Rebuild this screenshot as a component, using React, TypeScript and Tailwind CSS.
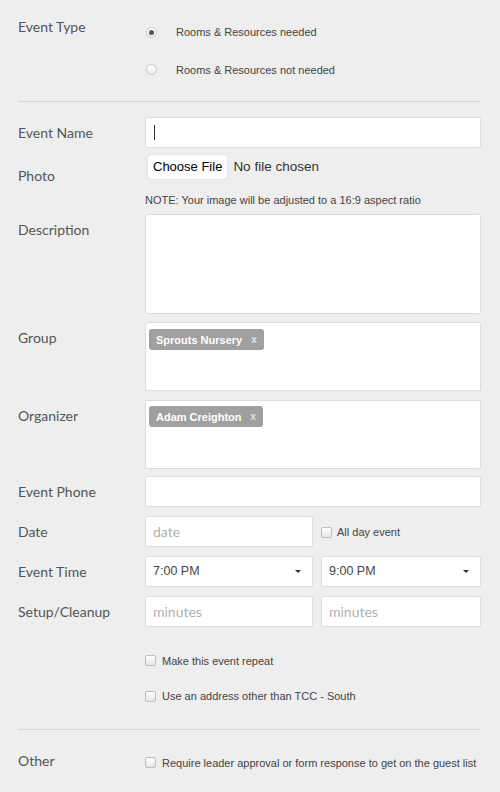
import React from 'react'

const label = "w-[127px] shrink-0 h-[31px] flex items-center text-[14px] text-[#555] font-['Lato',sans-serif]"
const box = "bg-white border border-[#dcdcdc] rounded-[2px]"
const helv = "font-['Liberation_Sans',Arial,sans-serif]"

function Radio({ checked, text }: { checked?: boolean; text: string }) {
  return (
    <div className="flex items-center">
      <span className="w-[11px] h-[11px] rounded-full border border-[#c8c8c8] bg-gradient-to-b from-white to-[#ececec] flex items-center justify-center ml-[1px]">
        {checked && <span className="w-[5px] h-[5px] rounded-full bg-[#555]" />}
      </span>
      <span className={`ml-[19px] text-[11px] text-[#444] ${helv}`}>{text}</span>
    </div>
  )
}

function Check({ text, gap = 'ml-[6px]' }: { text: string; gap?: string }) {
  return (
    <div className="flex items-center">
      <span className="w-[11px] h-[11px] rounded-[2px] border border-[#bdbdbd] bg-gradient-to-b from-white to-[#e6e6e6]" />
      <span className={`${gap} text-[11px] text-[#444] ${helv}`}>{text}</span>
    </div>
  )
}

function Tag({ name }: { name: string }) {
  return (
    <span className={`inline-flex items-center h-[21px] px-[7px] rounded-[3px] bg-[#a0a0a0] text-white text-[11px] font-bold ${helv}`}>
      {name}
      <span className="ml-[9px] text-[#e2e2e2] text-[10px]">x</span>
    </span>
  )
}

function Select({ value, w }: { value: string; w: string }) {
  return (
    <div className={`${box} ${w} h-[31px] flex items-center justify-between pl-[7px] pr-[11px] text-[12.5px] text-[#444] ${helv}`}>
      <span>{value}</span>
      <span className="w-0 h-0 border-l-[3px] border-r-[3px] border-t-[3px] border-l-transparent border-r-transparent border-t-[#333]" />
    </div>
  )
}

export default function App() {
  return (
    <div className="min-h-[792px] w-[500px] bg-[#eeeeee] pl-[18px] pr-[19px] pt-[18px]">
      {/* Event type */}
      <div className="flex">
        <div className="w-[127px] shrink-0 text-[14px] text-[#555] font-['Lato',sans-serif] leading-[17px]">Event Type</div>
        <div className="flex flex-col gap-[21px] pt-[6px]">
          <Radio checked text="Rooms & Resources needed" />
          <Radio text="Rooms & Resources not needed" />
        </div>
      </div>

      <div className="mt-[23px] h-px bg-[#d6d6d6]" />

      <div className="mt-[15px] flex">
        <div className={label}>Event Name</div>
        <div className={`${box} flex-1 h-[31px] flex items-center pl-[8px]`}>
          <span className="w-px h-[15px] bg-[#333]" />
        </div>
      </div>

      <div className="mt-[7px] flex">
        <div className={`${label} pt-[10px]`}>Photo</div>
        <div className="flex items-start">
          <span className={`ml-[3px] h-[24px] px-[5px] flex items-center bg-white rounded-[3px] shadow-[0_0_1px_rgba(0,0,0,0.35)] text-[13px] text-black ${helv}`}>Choose File</span>
          <span className={`ml-[6px] h-[24px] flex items-center text-[13.5px] text-[#333] ${helv}`}>No file chosen</span>
        </div>
      </div>

      <div className={`ml-[127px] mt-[6px] text-[11px] text-[#444] ${helv}`}>NOTE: Your image will be adjusted to a 16:9 aspect ratio</div>

      <div className="mt-[5px] flex">
        <div className={label}>Description</div>
        <div className={`${box} flex-1 h-[100px]`} />
      </div>

      <div className="mt-[8px] flex">
        <div className={label}>Group</div>
        <div className={`${box} flex-1 h-[69px] p-[3px]`}>
          <Tag name="Sprouts Nursery" />
        </div>
      </div>

      <div className="mt-[9px] flex">
        <div className={label}>Organizer</div>
        <div className={`${box} flex-1 h-[69px] p-[2px] pl-[3px]`}>
          <Tag name="Adam Creighton" />
        </div>
      </div>

      <div className="mt-[7px] flex">
        <div className={label}>Event Phone</div>
        <div className={`${box} flex-1 h-[31px]`} />
      </div>

      <div className="mt-[9px] flex items-center">
        <div className={label}>Date</div>
        <div className={`${box} w-[168px] h-[31px] flex items-center pl-[7px] text-[14px] text-[#b0b0b0] font-['Lato',sans-serif]`}>date</div>
        <div className="ml-[8px] mt-[3px]">
          <Check text="All day event" gap="ml-[5px]" />
        </div>
      </div>

      <div className="mt-[9px] flex">
        <div className={label}>Event Time</div>
        <Select value="7:00 PM" w="w-[168px]" />
        <div className="ml-[8px] flex-1 flex">
          <Select value="9:00 PM" w="flex-1" />
        </div>
      </div>

      <div className="mt-[9px] flex">
        <div className={label}>Setup/Cleanup</div>
        <div className={`${box} w-[168px] h-[31px] flex items-center pl-[7px] text-[14px] text-[#b0b0b0] font-['Lato',sans-serif]`}>minutes</div>
        <div className={`${box} ml-[8px] flex-1 h-[31px] flex items-center pl-[7px] text-[14px] text-[#b0b0b0] font-['Lato',sans-serif]`}>minutes</div>
      </div>

      <div className="ml-[127px] mt-[26px] flex flex-col gap-[19px]">
        <Check text="Make this event repeat" />
        <Check text="Use an address other than TCC - South" />
      </div>

      <div className="mt-[24px] h-px bg-[#d6d6d6]" />

      <div className="mt-[20px] flex items-center">
        <div className="w-[127px] shrink-0 text-[14px] text-[#555] font-['Lato',sans-serif]">Other</div>
        <div className="mt-[5px]">
          <Check text="Require leader approval or form response to get on the guest list" />
        </div>
      </div>
    </div>
  )
}
